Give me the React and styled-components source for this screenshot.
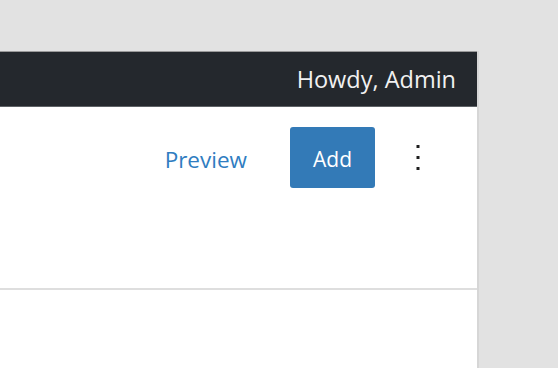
import React from "react";
import styled, { createGlobalStyle } from "styled-components";

const Global = createGlobalStyle`
  html, body { margin: 0; padding: 0; background: #e2e2e2; }
  body { font-family: "Open Sans", "Noto Sans", sans-serif; }
`;

const Page = styled.div`
  width: 558px;
  height: 368px;
  padding-top: 51px;
  box-sizing: border-box;
  overflow: hidden;
`;

const Window = styled.div`
  width: 477px;
  height: 317px;
  background: #fff;
  border-right: 2px solid #d6d6d6;
  display: flex;
  flex-direction: column;
`;

const AdminBar = styled.div`
  height: 54px;
  background: #24282d;
  border-top: 1px solid #9a9a9a;
  border-bottom: 1px solid #5e6266;
  display: flex;
  align-items: center;
  justify-content: flex-end;
  padding-right: 21px;
  color: #f1f1f1;
  font-size: 23.5px;
`;

const Toolbar = styled.div`
  height: 183px;
  border-bottom: 2px solid #dedede;
  box-sizing: border-box;
  display: flex;
  align-items: flex-start;
  justify-content: flex-end;
  padding: 20px 0 0 0;
`;

const LinkButton = styled.span`
  color: #2f7dc1;
  font-size: 22.5px;
  height: 61px;
  box-sizing: border-box;
  padding-top: 3px;
  display: flex;
  align-items: center;
  margin-right: 43px;
`;

const PrimaryButton = styled.button`
  width: 85px;
  height: 61px;
  background: #337ab7;
  color: #fff;
  border: none;
  border-radius: 3px;
  font-family: inherit;
  font-size: 21px;
  padding: 3px 0 0 0;
  margin-right: 36px;
`;

const MoreButton = styled.div`
  width: 14px;
  height: 61px;
  margin-right: 52px;
  display: flex;
  align-items: center;
  justify-content: center;
`;

export default function App() {
  return (
    <>
      <Global />
      <Page>
        <Window>
          <AdminBar>Howdy, Admin</AdminBar>
          <Toolbar>
            <LinkButton>Preview</LinkButton>
            <PrimaryButton>Add</PrimaryButton>
            <MoreButton>
              <svg width="4" height="26" viewBox="0 0 4 26">
                <rect x="0.5" y="0" width="3" height="3" fill="#1e1e1e" />
                <rect x="0.5" y="11" width="3" height="3" fill="#1e1e1e" />
                <rect x="0.5" y="22" width="3" height="3" fill="#1e1e1e" />
              </svg>
            </MoreButton>
          </Toolbar>
        </Window>
      </Page>
    </>
  );
}
